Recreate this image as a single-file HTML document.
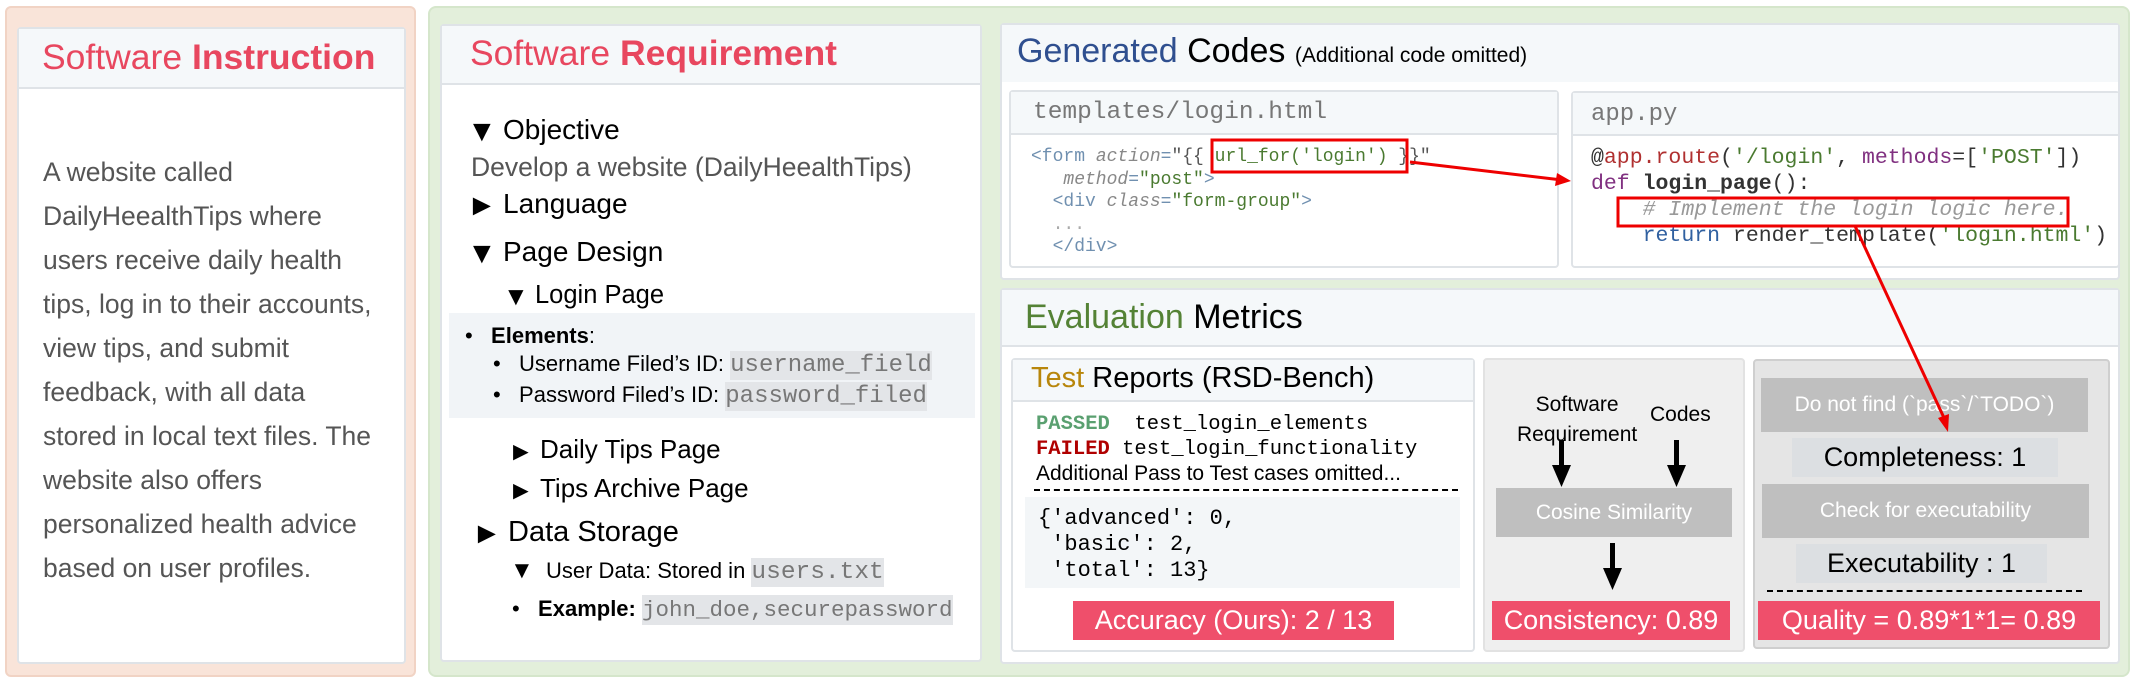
<!DOCTYPE html>
<html><head><meta charset="utf-8"><style>
*{margin:0;padding:0;box-sizing:border-box}
body{width:2143px;height:677px;background:#fff;position:relative;overflow:hidden;font-family:"Liberation Sans",sans-serif}
.a{position:absolute;white-space:nowrap}
.card{position:absolute;background:#fff;border:2px solid #dfe3e7;border-radius:4px}
.hd{position:absolute;background:#f5f8fa;border-bottom:2px solid #dfe3e7}
.m{font-family:"Liberation Mono",monospace}
.code{background:#e3e5e8;color:#777;font-family:"Liberation Mono",monospace}
.gb{position:absolute;background:#bfbfbf;color:#fff;text-align:center}
.lb{position:absolute;background:#dcdfe2;color:#000;text-align:center}
.pk{position:absolute;background:#ef4f6b;color:#fff;text-align:center}
.tri{font-size:30px;display:inline-block;width:36px;vertical-align:-2px}
.tri2{font-size:26px;display:inline-block;width:32px;vertical-align:-2px}
</style></head><body>
<!-- left -->
<div class="a" style="left:5px;top:6px;width:411px;height:671px;background:#f9e4d9;border:2px solid #f1d3c4;border-radius:6px"></div>
<div class="card" style="left:17px;top:27px;width:389px;height:637px"></div>
<div class="hd" style="left:19px;top:29px;width:385px;height:60px"></div>
<div class="a" style="left:42px;top:37px;font-size:35.5px;color:#e8475f">Software <b>Instruction</b></div>
<div class="a" style="left:43px;top:150px;font-size:26.5px;line-height:44px;color:#555">A website called<br>DailyHeealthTips where<br>users receive daily health<br>tips, log in to their accounts,<br>view tips, and submit<br>feedback, with all data<br>stored in local text files. The<br>website also offers<br>personalized health advice<br>based on user profiles.</div>
<!-- green -->
<div class="a" style="left:428px;top:6px;width:1702px;height:671px;background:#e3efdb;border:2px solid #d5e6cb;border-radius:8px"></div>
<div class="card" style="left:440px;top:24px;width:542px;height:638px"></div>
<div class="hd" style="left:442px;top:26px;width:538px;height:59px"></div>
<div class="a" style="left:470px;top:33px;font-size:35.5px;color:#e8475f">Software <b>Requirement</b></div>
<div class="a" style="left:467px;top:114px;font-size:28px"><span class="tri">▼</span>Objective</div>
<div class="a" style="left:471px;top:152px;font-size:26.5px;color:#555">Develop a website (DailyHeealthTips)</div>
<div class="a" style="left:467px;top:188px;font-size:28px"><span class="tri">►</span>Language</div>
<div class="a" style="left:467px;top:236px;font-size:28px"><span class="tri">▼</span>Page Design</div>
<div class="a" style="left:503px;top:281px;font-size:25.5px"><span class="tri2">▼</span>Login Page</div>
<div class="a" style="left:449px;top:313px;width:526px;height:105px;background:#f1f4f7"></div>
<div class="a" style="left:465px;top:323px;font-size:22px">•&nbsp;&nbsp; <b>Elements</b>:</div>
<div class="a" style="left:493px;top:351px;font-size:22px">•&nbsp;&nbsp; Username Filed’s ID: <span class="code" style="font-size:24px;padding:1px 0">username_field</span></div>
<div class="a" style="left:493px;top:382px;font-size:22px">•&nbsp;&nbsp; Password Filed’s ID: <span class="code" style="font-size:24px;padding:1px 0">password_filed</span></div>
<div class="a" style="left:508px;top:434px;font-size:26px"><span class="tri2">►</span>Daily Tips Page</div>
<div class="a" style="left:508px;top:473px;font-size:26px"><span class="tri2">►</span>Tips Archive Page</div>
<div class="a" style="left:472px;top:516px;font-size:29px"><span class="tri">►</span>Data Storage</div>
<div class="a" style="left:510px;top:557px;font-size:22px"><span style="font-size:24px">▼</span>&nbsp; User Data: Stored in <span class="code" style="font-size:24.5px;padding:1px 0">users.txt</span></div>
<div class="a" style="left:512px;top:596px;font-size:22px">•&nbsp;&nbsp; <b>Example:</b> <span class="code" style="font-size:22.5px;padding:2px 0">john_doe,securepassword</span></div>
<!-- generated codes -->
<div class="card" style="left:1000px;top:23px;width:1120px;height:257px"></div>
<div class="hd" style="left:1002px;top:25px;width:1116px;height:57px;border-bottom:none"></div>
<div class="a" style="left:1017px;top:32px;font-size:34px"><span style="color:#2f4f8f">Generated</span> Codes <span style="font-size:21px">(Additional code omitted)</span></div>
<div class="card" style="left:1009px;top:90px;width:550px;height:178px"></div>
<div class="hd" style="left:1011px;top:92px;width:546px;height:43px"></div>
<div class="a m" style="left:1033px;top:99px;font-size:24.5px;color:#777">templates/login.html</div>
<div class="a m" style="left:1031px;top:146px;font-size:18px;line-height:22.5px;color:#7090b0;white-space:pre"><span>&lt;form</span> <i style="color:#888">action</i>=<span style="color:#555">"{{ <span style="color:#4a7a30">url_for('login')</span> }}"</span>
   <i style="color:#888">method</i>=<span style="color:#4a7a30">"post"</span>&gt;
  &lt;div <i style="color:#888">class</i>=<span style="color:#4a7a30">"form-group"</span>&gt;
  <span style="color:#aaa">...</span>
  &lt;/div&gt;</div>
<div class="card" style="left:1571px;top:91px;width:549px;height:177px"></div>
<div class="hd" style="left:1573px;top:93px;width:545px;height:43px"></div>
<div class="a m" style="left:1591px;top:101px;font-size:24px;color:#777">app.py</div>
<div class="a m" style="left:1591px;top:145px;font-size:21.5px;line-height:26px;color:#333;white-space:pre">@<span style="color:#b03030">app.route</span>(<span style="color:#4a7a30">'/login'</span>, <span style="color:#803080">methods</span>=[<span style="color:#4a7a30">'POST'</span>])
<span style="color:#803080">def</span> <b>login_page</b>():
    <i style="color:#999"># Implement the login logic here.</i>
    <span style="color:#3060a0">return</span> render_template(<span style="color:#4a7a30">'login.html'</span>)</div>
<!-- eval -->
<div class="card" style="left:1000px;top:288px;width:1120px;height:376px"></div>
<div class="hd" style="left:1002px;top:290px;width:1116px;height:57px"></div>
<div class="a" style="left:1025px;top:298px;font-size:34px"><span style="color:#548235">Evaluation</span> Metrics</div>
<div class="card" style="left:1011px;top:358px;width:464px;height:294px"></div>
<div class="hd" style="left:1013px;top:360px;width:460px;height:42px"></div>
<div class="a" style="left:1031px;top:362px;font-size:29px"><span style="color:#b8860b">Test</span> Reports (RSD-Bench)</div>
<div class="a m" style="left:1036px;top:412px;font-size:20.5px;line-height:25px;white-space:pre"><b style="color:#5aa070">PASSED</b>  test_login_elements
<b style="color:#b00000">FAILED</b> test_login_functionality</div>
<div class="a" style="left:1036px;top:462px;font-size:21px">Additional Pass to Test cases omitted...</div>
<div class="a" style="left:1034px;top:489px;width:424px;border-top:2px dashed #000"></div>
<div class="a" style="left:1025px;top:497px;width:435px;height:91px;background:#f3f6f8"></div>
<div class="a m" style="left:1038px;top:506px;font-size:22px;line-height:26px;white-space:pre">{'advanced': 0,
 'basic': 2,
 'total': 13}</div>
<div class="pk" style="left:1073px;top:601px;width:321px;height:39px;font-size:27px;line-height:39px">Accuracy (Ours): 2 / 13</div>
<div class="a" style="left:1483px;top:358px;width:262px;height:294px;background:#efefef;border:2px solid #e2e2e2;border-radius:4px"></div>
<div class="a" style="left:1517px;top:390px;font-size:21px;line-height:30px;text-align:center">Software<br>Requirement</div>
<div class="a" style="left:1650px;top:403px;font-size:21px">Codes</div>
<svg class="a" style="left:1480px;top:435px" width="270" height="160"><g fill="#000"><rect x="79" y="5" width="5" height="30"/><path d="M72 30h19l-9.5 22z"/><rect x="194" y="5" width="5" height="30"/><path d="M187 30h19l-9.5 22z"/><rect x="130" y="108" width="5" height="30"/><path d="M123 133h19l-9.5 22z"/></g></svg>
<div class="gb" style="left:1496px;top:488px;width:236px;height:49px;font-size:21px;line-height:49px">Cosine Similarity</div>
<div class="pk" style="left:1492px;top:601px;width:238px;height:39px;font-size:27px;line-height:39px">Consistency: 0.89</div>
<div class="a" style="left:1753px;top:359px;width:357px;height:290px;background:#e5e5e5;border:2px solid #cfcfcf;border-radius:4px"></div>
<div class="gb" style="left:1761px;top:378px;width:327px;height:54px;font-size:21px;line-height:54px">Do not find (`pass`/`TODO`)</div>
<div class="lb" style="left:1792px;top:438px;width:266px;height:39px;font-size:27px;line-height:39px">Completeness: 1</div>
<div class="gb" style="left:1762px;top:484px;width:327px;height:54px;font-size:21px;line-height:54px">Check for executability</div>
<div class="lb" style="left:1796px;top:544px;width:251px;height:39px;font-size:27px;line-height:39px">Executability : 1</div>
<div class="a" style="left:1767px;top:590px;width:315px;border-top:2px dashed #000"></div>
<div class="pk" style="left:1758px;top:601px;width:342px;height:39px;font-size:27px;line-height:39px">Quality = 0.89*1*1= 0.89</div>
<!-- red annotations -->
<svg class="a" style="left:0;top:0" width="2143" height="677"><g fill="none" stroke="#e00" stroke-width="3"><rect x="1212" y="140" width="195" height="32"/><rect x="1618" y="198" width="450" height="28"/><path d="M1410 162L1562 180"/><path d="M1855 226L1945 420"/></g><g fill="#e00"><path d="M1571 181l-14 -8l-2 13z"/><path d="M1948 432l-10 -14l11 -4z"/></g></svg>
</body></html>
